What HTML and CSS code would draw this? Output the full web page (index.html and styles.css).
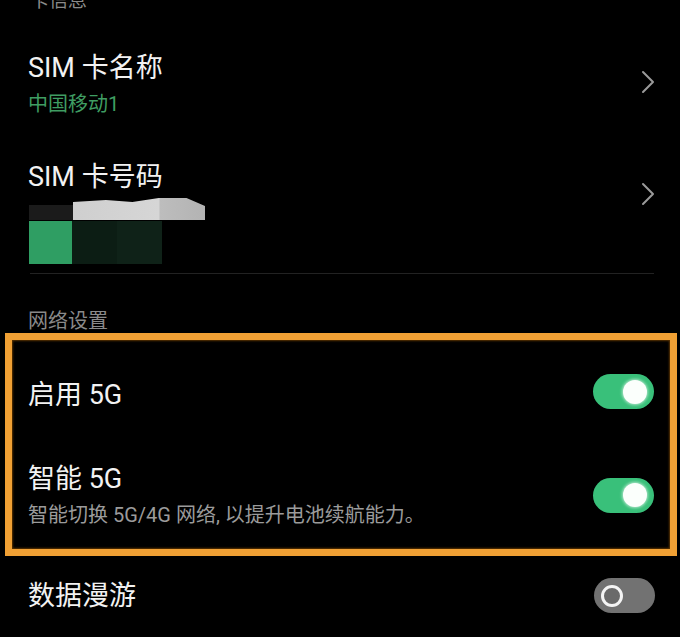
FILE: index.html
```html
<!DOCTYPE html>
<html lang="zh-CN">
<head>
<meta charset="utf-8">
<title>SIM 卡信息</title>
<link rel="stylesheet" href="styles.css">
</head>
<body>
<div class="page">
  <div class="group-label first">卡信息</div>

  <div class="row row-name">
    <div class="row-text">
      <div class="title">SIM 卡名称</div>
      <div class="sub-green">中国移动1</div>
    </div>
    <svg class="chev" viewBox="0 0 14 24" width="14" height="24"><polyline points="2,2 12,12 2,22"/></svg>
  </div>

  <div class="row row-number">
    <div class="row-text">
      <div class="title">SIM 卡号码</div>
      <div class="mosaic">
        <div class="mosaic-top">
          <div class="m-dark"></div>
          <div class="m-light"></div>
        </div>
        <div class="mosaic-bottom">
          <div class="m-green"></div>
          <div class="m-dkgreen"></div>
          <div class="m-dkgreen2"></div>
        </div>
      </div>
    </div>
    <svg class="chev" viewBox="0 0 14 24" width="14" height="24"><polyline points="2,2 12,12 2,22"/></svg>
  </div>

  <div class="divider"></div>

  <div class="group-label net">网络设置</div>

  <div class="highlight">
    <div class="hrow hrow-first">
      <div class="title">启用 5G</div>
      <div class="toggle on up"><span class="knob"></span></div>
    </div>
    <div class="hrow hrow-second">
      <div class="row-text">
        <div class="title">智能 5G</div>
        <div class="desc">智能切换 5G/4G 网络, 以提升电池续航能力。</div>
      </div>
      <div class="toggle on"><span class="knob"></span></div>
    </div>
  </div>

  <div class="row row-roam">
    <div class="title">数据漫游</div>
    <div class="toggle off"><span class="knob"></span></div>
  </div>
</div>
</body>
</html>
```

FILE: styles.css
```css
html, body {
  margin: 0;
  padding: 0;
  background: #000;
}
body {
  width: 680px;
  height: 637px;
  overflow: hidden;
  font-family: "Roboto", "Noto Sans CJK SC", sans-serif;
  color: #efefef;
}
.page {
  margin-top: -11px;
  display: flex;
  flex-direction: column;
}
.group-label {
  font-size: 19px;
  line-height: 24px;
  color: #8a8a8a;
  padding-left: 30px;
}
.group-label.net {
  font-size: 20px;
  padding-left: 28px;
  margin-top: 35px;
}
.row {
  display: flex;
  justify-content: space-between;
  align-items: flex-start;
  padding-left: 28px;
  padding-right: 25px;
}
.row-name {
  padding-top: 38px;
  padding-bottom: 21px;
}
.row-number {
  padding-top: 21px;
  padding-bottom: 9px;
}
.row-text {
  display: flex;
  flex-direction: column;
}
.title {
  font-size: 27px;
  line-height: 34px;
  color: #f2f2f2;
}
.sub-green {
  font-size: 20px;
  line-height: 28px;
  margin-top: 5px;
  color: #3f9d62;
}
.chev {
  margin-top: 19px;
  fill: none;
  stroke: #9a9a9a;
  stroke-width: 2;
  stroke-linecap: round;
  stroke-linejoin: round;
}
.row-number .chev {
  margin-top: 22px;
}
.mosaic {
  margin-top: 4px;
  margin-left: 1px;
  display: flex;
  flex-direction: column;
}
.mosaic-top {
  display: flex;
  align-items: flex-end;
  height: 22px;
}
.m-dark {
  width: 44px;
  height: 15px;
  background: #1b1b1b;
}
.m-light {
  width: 132px;
  height: 22px;
  background: linear-gradient(90deg, #cfcfcf 0%, #d6d6d6 65%, #bdbdbd 66%, #b3b3b3 100%);
  clip-path: polygon(0 4px, 25% 2px, 45% 4px, 65% 0, 86% 0, 100% 8px, 100% 100%, 0 100%);
}
.mosaic-bottom {
  display: flex;
  height: 43px;
  margin-top: 1px;
}
.m-green {
  width: 43px;
  background: #2f9e63;
}
.m-dkgreen {
  width: 45px;
  background: #0c1d14;
}
.m-dkgreen2 {
  width: 45px;
  background: #0f2218;
}
.divider {
  height: 1px;
  background: #222;
  margin-left: 30px;
  margin-right: 26px;
}
.highlight {
  margin-left: 5px;
  margin-right: 3px;
  border: 7px solid #f0a034;
  box-shadow: inset 0 0 2px 1px #5a3300;
  display: flex;
  flex-direction: column;
  padding: 34px 16px 21px 16px;
}
.hrow {
  display: flex;
  justify-content: space-between;
  align-items: center;
}
.hrow-second {
  margin-top: 47px;
}
.desc {
  font-size: 20px;
  line-height: 26px;
  margin-top: 6px;
  color: #9b9b9b;
}
.toggle {
  width: 61px;
  height: 35px;
  border-radius: 18px;
  display: flex;
  align-items: center;
  box-sizing: border-box;
  flex-shrink: 0;
}
.toggle.up {
  margin-bottom: 6px;
}
.toggle.on {
  background: #39c07a;
  justify-content: flex-end;
  padding-right: 7px;
}
.toggle.on .knob {
  width: 24px;
  height: 24px;
  border-radius: 50%;
  background: #fbfffc;
  box-shadow: 0 0 3px 1px rgba(255,255,255,0.6);
}
.toggle.off {
  background: #727272;
  justify-content: flex-start;
  padding-left: 7px;
}
.toggle.off .knob {
  width: 22px;
  height: 22px;
  border-radius: 50%;
  border: 3.5px solid #f4f4f4;
  box-sizing: border-box;
  background: #6a6a6a;
}
.row-roam {
  margin-top: 22px;
  align-items: center;
}
```
